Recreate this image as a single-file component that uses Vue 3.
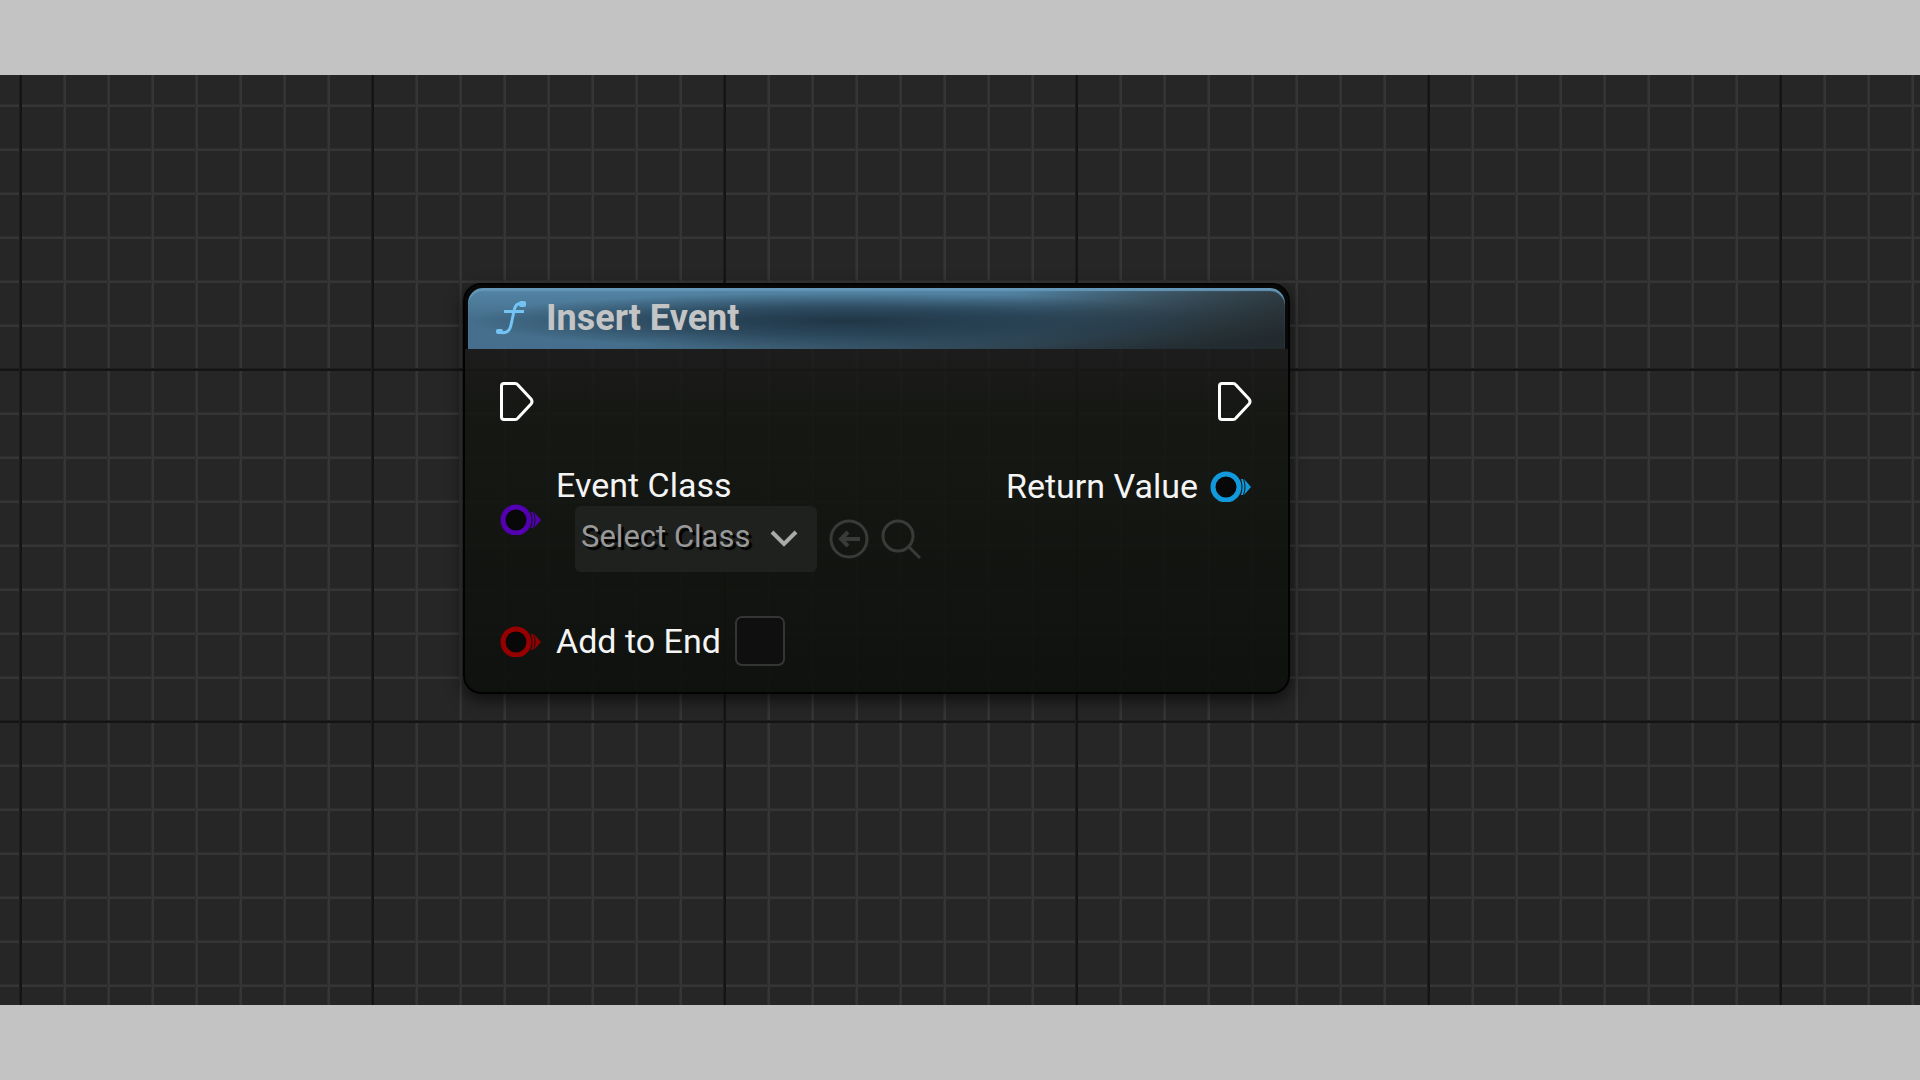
<template>
  <div class="page">
    <main class="graph">
      <section class="node">
        <header class="node-header">
          <svg class="fn-icon" viewBox="0 0 30 36" aria-hidden="true">
            <path d="M27 4C21 2 19 6 18 11L15 25C13.500 32 9 34 3 32" />
            <path d="M8 11.500H28" />
            <rect x="23" y="1" width="7" height="6" rx="2" />
            <rect x="0" y="29" width="7" height="5" rx="2" />
          </svg>
          <h1>{{ title }}</h1>
        </header>

        <div class="node-body">
          <div class="inputs">
            <svg class="exec-pin" viewBox="0 0 34 40" aria-hidden="true">
              <path :d="execPath" />
            </svg>

            <div class="pin-row">
              <svg class="pin purple" viewBox="0 0 42 32" aria-hidden="true">
                <path :d="arrowPath" />
                <circle cx="16" cy="17" r="13" />
              </svg>
              <div class="class-field">
                <label for="event-class">Event Class</label>
                <div class="picker">
                  <div class="select-wrap">
                    <select id="event-class" v-model="eventClass">
                      <option value="">Select Class</option>
                    </select>
                    <svg class="chevron" viewBox="0 0 28 18" aria-hidden="true">
                      <path d="M2 2L14 14L26 2" />
                    </svg>
                  </div>
                  <button type="button" aria-label="Use selected class">
                    <svg viewBox="0 0 40 42">
                      <circle cx="20" cy="21" r="18" />
                      <path class="arrow" d="M31 21H12M19 14L12 21L19 28" />
                    </svg>
                  </button>
                  <button type="button" aria-label="Browse to class">
                    <svg viewBox="0 0 40 42">
                      <circle cx="17" cy="18" r="15" />
                      <path d="M28 29L39 40" />
                    </svg>
                  </button>
                </div>
              </div>
            </div>

            <div class="pin-row">
              <svg class="pin red" viewBox="0 0 42 32" aria-hidden="true">
                <path :d="arrowPath" />
                <circle cx="16" cy="17" r="13" />
              </svg>
              <div class="bool-field">
                <label for="add-to-end">Add to End</label>
                <input id="add-to-end" v-model="addToEnd" type="checkbox" />
              </div>
            </div>
          </div>

          <div class="outputs">
            <svg class="exec-pin" viewBox="0 0 34 40" aria-hidden="true">
              <path :d="execPath" />
            </svg>
            <div class="return-row">
              <span>Return Value</span>
              <svg class="pin blue" viewBox="0 0 42 32" aria-hidden="true">
                <path :d="arrowPath" />
                <circle cx="16" cy="17" r="13" />
              </svg>
            </div>
          </div>
        </div>
      </section>
    </main>
  </div>
</template>

<script setup>
import { ref } from 'vue'

const title = ref('Insert Event')
const eventClass = ref('')
const addToEnd = ref(false)

const execPath = 'M4 1.500H15Q17 1.500 18 3L31 17Q33 19.500 31 22L18 36Q17 37.500 15 37.500H4Q1.500 37.500 1.500 35V4Q1.500 1.500 4 1.500Z'
const arrowPath = 'M31 9L33 9Q36 17 33 25L31 25Q34 17 31 9ZM34 9L41 17L34 25Q37 17 34 9Z'
</script>

<style>
body {
  margin: 0;
  background: #c3c3c3;
}
</style>

<style scoped>
.page {
  box-sizing: border-box;
  display: flex;
  min-height: 100vh;
  padding: 75px 0;
  background: #c3c3c3;
  font-family: Roboto, 'Liberation Sans', sans-serif;
}

.graph {
  position: relative;
  flex: 1;
  overflow: hidden;
  background-color: #262626;
  background-image:
    linear-gradient(90deg, #1e1e1e 1px, #141414 1px, #141414 3px, transparent 3px),
    linear-gradient(#1e1e1e 1px, #141414 1px, #141414 3px, transparent 3px),
    linear-gradient(90deg, #2e2e2e 1px, #353535 1px, #353535 3px, transparent 3px),
    linear-gradient(#2e2e2e 1px, #353535 1px, #353535 3px, transparent 3px);
  background-size: 352px 352px, 352px 352px, 44px 44px, 44px 44px;
  background-position: 19px 0, 0 293px, 19px 0, 0 29px;
}

.node {
  position: absolute;
  top: 208px;
  left: 463px;
  box-sizing: border-box;
  min-width: 827px;
  border: 2px solid #020202;
  border-radius: 18px;
  overflow: hidden;
  background: linear-gradient(rgba(26, 26, 26, 0.8) 64px, rgba(20, 22, 18, 0.87) 120px, rgba(13, 16, 12, 0.93));
  box-shadow: 0 6px 16px rgba(0, 0, 0, 0.6);
}

.node-header {
  display: flex;
  align-items: center;
  gap: 20px;
  height: 61px;
  margin: 3px 3px 0;
  padding: 0 28px 1px;
  box-sizing: border-box;
  border-radius: 15px 15px 0 0;
  background:
    radial-gradient(ellipse 46% 46% at 46% 54%, rgba(30, 51, 67, 0.95), rgba(32, 55, 72, 0.65) 50%, transparent),
    linear-gradient(172deg, transparent 45%, rgba(30, 37, 40, 0.85) 92%),
    linear-gradient(90deg, transparent 68%, rgba(54, 62, 66, 0.8)),
    linear-gradient(#5486a6, #456f8c 50%, #456f8c);
  box-shadow: 0 -4px 0 4px #080808, inset 0 3px 1px #6496b8;
}

.fn-icon {
  width: 30px;
  height: 36px;
  fill: none;
  stroke: #73c3f5;
  stroke-width: 3;
}

.fn-icon rect {
  fill: #73c3f5;
  stroke: none;
}

h1 {
  margin: 0;
  color: #c3c4c5;
  font-size: 36px;
  font-weight: 700;
  line-height: 40px;
}

.node-body {
  display: flex;
  justify-content: space-between;
  padding: 33px 36px 26px 35px;
  color: #f4f4f4;
  font-size: 34px;
  line-height: 38px;
}

.inputs,
.outputs {
  display: flex;
  flex-direction: column;
  gap: 44px;
}

.outputs {
  align-items: flex-end;
}

.exec-pin {
  width: 34px;
  height: 40px;
  fill: none;
  stroke: #fff;
  stroke-width: 3;
}

.pin-row {
  display: flex;
  align-items: center;
  gap: 14px;
}

.pin {
  flex: none;
  width: 42px;
  height: 32px;
}

.pin circle {
  fill: #080808;
  stroke: currentColor;
  stroke-width: 5;
}

.pin path {
  fill: currentColor;
}

.purple {
  color: #5200b0;
}

.red {
  color: #960000;
}

.blue {
  color: #1299dc;
}

.class-field label {
  display: block;
  margin-bottom: 2px;
}

.picker {
  display: flex;
  align-items: center;
  gap: 12px;
  padding-left: 19px;
}

.select-wrap {
  position: relative;
}

select {
  display: block;
  width: 242px;
  height: 66px;
  padding: 0 40px 4px 6px;
  border: 0;
  border-radius: 6px;
  appearance: none;
  background: #1f211f;
  color: #999;
  font: 31px / 40px Roboto, 'Liberation Sans', sans-serif;
  text-shadow: 3px 3px 1px #000;
}

.chevron {
  position: absolute;
  top: 24px;
  right: 19px;
  width: 28px;
  height: 18px;
  fill: none;
  stroke: #aaa;
  stroke-width: 4;
  pointer-events: none;
}

button {
  display: flex;
  padding: 0;
  border: 0;
  background: none;
  cursor: pointer;
}

button svg {
  width: 40px;
  height: 42px;
  fill: none;
  stroke: #393b39;
  stroke-width: 3;
}

button .arrow {
  stroke-width: 4;
}

.bool-field {
  display: flex;
  align-items: center;
  gap: 14px;
}

input {
  box-sizing: border-box;
  width: 50px;
  height: 50px;
  margin: 0;
  border: 2px solid #353535;
  border-radius: 7px;
  appearance: none;
  background: #0f0f0f;
}

input:checked {
  background: #2678c8;
}

.return-row {
  display: flex;
  align-items: center;
  gap: 12px;
  height: 40px;
}
</style>
